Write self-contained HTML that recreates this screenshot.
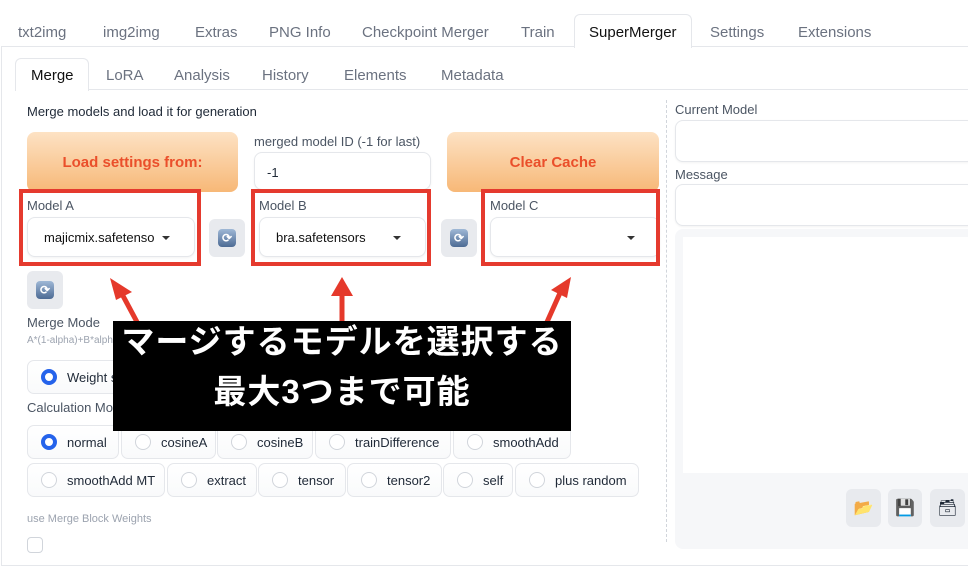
<!DOCTYPE html>
<html><head><meta charset="utf-8"><style>
*{box-sizing:border-box;margin:0;padding:0}
body{width:968px;height:542px;overflow:hidden;background:#fff;font-family:"Liberation Sans","Noto Sans CJK JP",sans-serif;color:#1f2937;position:relative}
.a{position:absolute}
.tt{font-size:15px;color:#6b7280}
.lbl{font-size:13px;color:#4b5563}
.btn{border-radius:8px;background:linear-gradient(180deg,#fde2c4,#f7b877);color:#ea4f2b;font-weight:bold;font-size:15px;display:flex;align-items:center;justify-content:center}
.box{border:1px solid #e5e7eb;border-radius:8px;background:#fff;box-shadow:0 1px 2px rgba(0,0,0,.05)}
.dd{font-size:13px;color:#111;display:flex;align-items:center;padding-left:16px}
.car{position:absolute;right:24px;top:18px;border:4px solid transparent;border-top:4px solid #333;border-bottom:0}
.rb{border:4px solid #e53a2e}
.ref{border-radius:6px;background:#e8eaee;display:flex;align-items:center;justify-content:center}
.ic{width:18px;height:18px;border-radius:4px;background:linear-gradient(#9fb8d6,#4d6b94);display:flex;align-items:center;justify-content:center;color:#fff;font-size:12px;font-weight:bold}
.r{border:1px solid #e5e7eb;border-radius:7px;background:linear-gradient(#fff,#f9fafb);display:flex;align-items:center;font-size:13px;color:#1f2937;padding-left:13px;height:34px}
.c{width:16px;height:16px;border-radius:50%;border:1px solid #d1d5db;margin-right:10px;background:#fff;flex:none}
.c.on{border:4px solid #2563eb}
</style></head><body>
<!-- top tabs -->
<div class="a tt" style="left:18px;top:24px">txt2img</div>
<div class="a tt" style="left:103px;top:24px">img2img</div>
<div class="a tt" style="left:195px;top:24px">Extras</div>
<div class="a tt" style="left:269px;top:24px">PNG Info</div>
<div class="a tt" style="left:362px;top:24px">Checkpoint Merger</div>
<div class="a tt" style="left:521px;top:24px">Train</div>
<div class="a" style="left:574px;top:14px;width:118px;height:34px;border:1px solid #e5e7eb;border-bottom:none;border-radius:6px 6px 0 0;background:#fff;z-index:2"></div>
<div class="a" style="left:589px;top:24px;font-size:15px;color:#111;z-index:3">SuperMerger</div>
<div class="a tt" style="left:710px;top:24px">Settings</div>
<div class="a tt" style="left:798px;top:24px">Extensions</div>
<div class="a" style="left:1px;top:46px;width:980px;height:520px;border:1px solid #e5e7eb"></div>
<!-- inner tabs -->
<div class="a" style="left:15px;top:58px;width:74px;height:33px;border:1px solid #e5e7eb;border-bottom:none;border-radius:6px 6px 0 0;background:#fff;z-index:2"></div>
<div class="a" style="left:31px;top:67px;font-size:15px;color:#111;z-index:3">Merge</div>
<div class="a tt" style="left:106px;top:67px">LoRA</div>
<div class="a tt" style="left:174px;top:67px">Analysis</div>
<div class="a tt" style="left:262px;top:67px">History</div>
<div class="a tt" style="left:344px;top:67px">Elements</div>
<div class="a tt" style="left:441px;top:67px">Metadata</div>
<div class="a" style="left:15px;top:89px;width:960px;height:1px;background:#e5e7eb"></div>
<div class="a" style="left:666px;top:100px;height:442px;border-left:1px dashed #d1d5db"></div>
<div class="a" style="left:27px;top:104px;font-size:13px;color:#1f2937">Merge models and load it for generation</div>
<div class="a btn" style="left:27px;top:132px;width:211px;height:60px">Load settings from:</div>
<div class="a lbl" style="left:254px;top:134px">merged model ID (-1 for last)</div>
<div class="a box" style="left:254px;top:152px;width:177px;height:38px;font-size:13px;padding:12px 12px">-1</div>
<div class="a btn" style="left:447px;top:132px;width:212px;height:60px">Clear Cache</div>
<!-- models -->
<div class="a lbl" style="left:27px;top:198px">Model A</div>
<div class="a box dd" style="left:27px;top:217px;width:168px;height:40px">majicmix.safetenso<span class="car"></span></div>
<div class="a ref" style="left:209px;top:219px;width:36px;height:38px"><div class="ic">⟳</div></div>
<div class="a lbl" style="left:259px;top:198px">Model B</div>
<div class="a box dd" style="left:259px;top:217px;width:167px;height:40px">bra.safetensors<span class="car"></span></div>
<div class="a ref" style="left:441px;top:219px;width:36px;height:38px"><div class="ic">⟳</div></div>
<div class="a lbl" style="left:490px;top:198px">Model C</div>
<div class="a box dd" style="left:490px;top:217px;width:170px;height:40px"><span class="car"></span></div>
<div class="a rb" style="left:19px;top:189px;width:182px;height:77px"></div>
<div class="a rb" style="left:251px;top:189px;width:180px;height:77px"></div>
<div class="a rb" style="left:481px;top:189px;width:179px;height:77px"></div>
<div class="a ref" style="left:27px;top:271px;width:36px;height:38px"><div class="ic">⟳</div></div>
<div class="a lbl" style="left:27px;top:315px">Merge Mode</div>
<div class="a" style="left:27px;top:335px;font-size:10px;color:#9ca3af">A*(1-alpha)+B*alpha</div>
<div class="a r" style="left:27px;top:360px;width:200px">
<span class="c on"></span>Weight sum</div>
<div class="a lbl" style="left:27px;top:400px">Calculation Mode</div>
<div class="a r" style="left:27px;top:425px;width:92px"><span class="c on"></span>normal</div>
<div class="a r" style="left:121px;top:425px;width:95px"><span class="c"></span>cosineA</div>
<div class="a r" style="left:217px;top:425px;width:96px"><span class="c"></span>cosineB</div>
<div class="a r" style="left:315px;top:425px;width:136px"><span class="c"></span>trainDifference</div>
<div class="a r" style="left:453px;top:425px;width:118px"><span class="c"></span>smoothAdd</div>
<div class="a r" style="left:27px;top:463px;width:138px"><span class="c"></span>smoothAdd MT</div>
<div class="a r" style="left:167px;top:463px;width:90px"><span class="c"></span>extract</div>
<div class="a r" style="left:258px;top:463px;width:88px"><span class="c"></span>tensor</div>
<div class="a r" style="left:347px;top:463px;width:95px"><span class="c"></span>tensor2</div>
<div class="a r" style="left:443px;top:463px;width:70px"><span class="c"></span>self</div>
<div class="a r" style="left:515px;top:463px;width:124px"><span class="c"></span>plus random</div>
<div class="a" style="left:27px;top:513px;font-size:11px;color:#9ca3af">use Merge Block Weights</div>
<div class="a" style="left:27px;top:537px;width:16px;height:16px;border:1px solid #d1d5db;border-radius:4px"></div>
<!-- right -->
<div class="a lbl" style="left:675px;top:102px">Current Model</div>
<div class="a box" style="left:675px;top:120px;width:300px;height:42px"></div>
<div class="a lbl" style="left:675px;top:167px">Message</div>
<div class="a box" style="left:675px;top:184px;width:300px;height:42px"></div>
<div class="a" style="left:675px;top:229px;width:300px;height:320px;background:#f6f7f9;border-radius:8px"></div>
<div class="a" style="left:683px;top:237px;width:290px;height:236px;background:#fff"></div>
<div class="a ref" style="left:846px;top:489px;width:35px;height:38px;font-size:16px">📂</div>
<div class="a ref" style="left:888px;top:489px;width:34px;height:38px;font-size:16px">💾</div>
<div class="a ref" style="left:930px;top:489px;width:35px;height:38px;font-size:16px">🗃</div>
<!-- arrows -->
<svg class="a" style="left:0;top:0" width="968" height="542">
<g stroke="#e5392b" stroke-width="5" fill="#e5392b">
<line x1="137" y1="322" x2="122" y2="294"/><polygon points="110,278 132,292 116,300" stroke="none"/>
<line x1="342" y1="322" x2="342" y2="295"/><polygon points="342,277 331,296 353,296" stroke="none"/>
<line x1="547" y1="322" x2="560" y2="293"/><polygon points="571,277 551,290 567,298" stroke="none"/>
</g></svg>
<div class="a" style="left:113px;top:321px;width:458px;height:110px;background:#000;overflow:hidden"><div style="position:relative;top:-4px;color:#fff;font-weight:bold;font-size:33px;text-align:center;line-height:50px;letter-spacing:1px">マージするモデルを選択する<br>最大3つまで可能</div></div>
</body></html>
